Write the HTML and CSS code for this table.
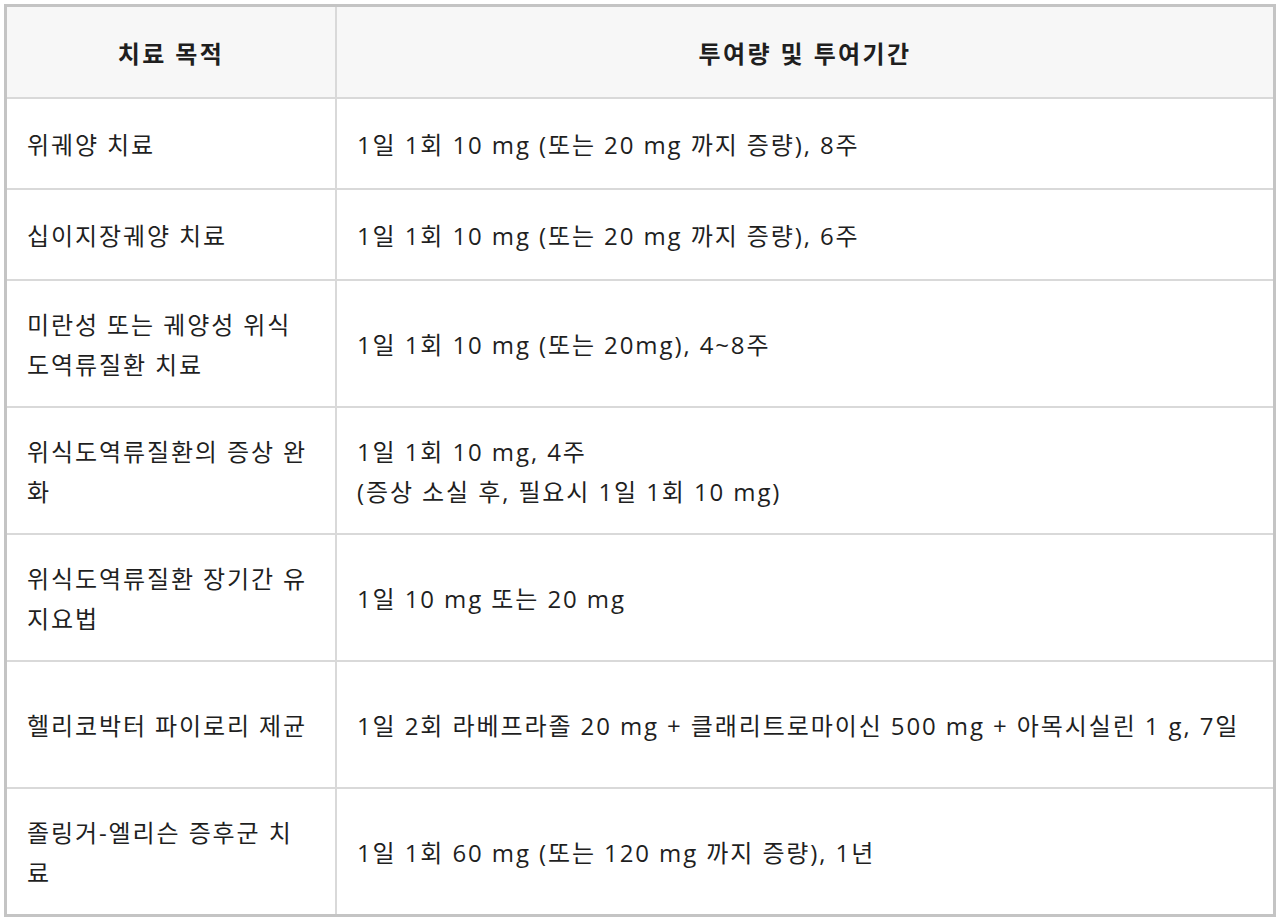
FILE: index.html
```html
<!DOCTYPE html>
<html lang="ko">
<head>
<meta charset="utf-8">
<title>투여량</title>
<link rel="stylesheet" href="styles.css">
</head>
<body>
<div class="table">
  <div class="cell head">치료 목적</div>
  <div class="cell head">투여량 및 투여기간</div>

  <div class="cell">위궤양 치료</div>
  <div class="cell">1일 1회 10 mg (또는 20 mg 까지 증량), 8주</div>

  <div class="cell">십이지장궤양 치료</div>
  <div class="cell">1일 1회 10 mg (또는 20 mg 까지 증량), 6주</div>

  <div class="cell">미란성 또는 궤양성 위식<br>도역류질환 치료</div>
  <div class="cell">1일 1회 10 mg (또는 20mg), 4~8주</div>

  <div class="cell">위식도역류질환의 증상 완<br>화</div>
  <div class="cell">1일 1회 10 mg, 4주<br>(증상 소실 후, 필요시 1일 1회 10 mg)</div>

  <div class="cell">위식도역류질환 장기간 유<br>지요법</div>
  <div class="cell">1일 10 mg 또는 20 mg</div>

  <div class="cell tall">헬리코박터 파이로리 제균</div>
  <div class="cell tall nowrap">1일 2회 라베프라졸 20 mg + 클래리트로마이신 500 mg + 아목시실린 1 g, 7일</div>

  <div class="cell">졸링거-엘리슨 증후군 치<br>료</div>
  <div class="cell">1일 1회 60 mg (또는 120 mg 까지 증량), 1년</div>
</div>
</body>
</html>
```

FILE: styles.css
```css
html, body {
  margin: 0;
  padding: 0;
  background: #ffffff;
}

body {
  padding: 4px;
  font-family: "Open Sans", "Noto Sans CJK KR", sans-serif;
  font-size: 24px;
  letter-spacing: 1.9px;
  color: #1f1f1f;
}

.table {
  width: 1272px;
  box-sizing: border-box;
  display: grid;
  grid-template-columns: 328px 1fr;
  gap: 2px;
  background: #d9d9d9;
  border: 3px solid #c4c4c4;
}

.cell {
  background: #ffffff;
  padding: 24px 20px 21px;
  line-height: 40px;
  min-height: 89px;
  display: flex;
  align-items: center;
  flex-wrap: wrap;
  box-sizing: border-box;
}

.cell.head {
  background: #f7f7f7;
  font-weight: 700;
  letter-spacing: 2.4px;
  justify-content: center;
  text-align: center;
  min-height: 90px;
}

.cell.tall {
  min-height: 125px;
}

.nowrap {
  white-space: nowrap;
}
```
